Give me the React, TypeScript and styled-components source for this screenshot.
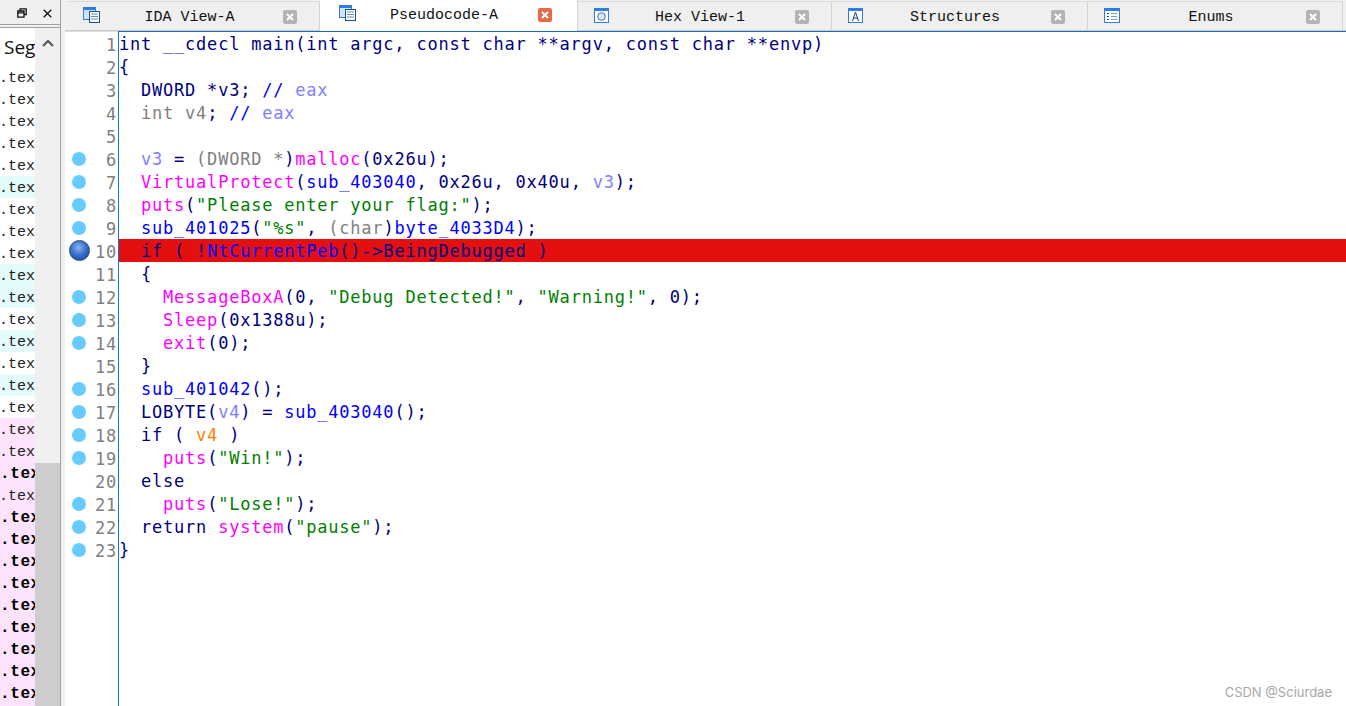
import styled, { createGlobalStyle } from "styled-components";

type Kind = "p" | "id" | "fn" | "str" | "cm" | "var" | "dim" | "hot";
type Tok = [Kind, string];

const COLORS: Record<Kind, string> = {
  p: "#000080",
  id: "#0000ff",
  fn: "#ff00ff",
  str: "#008000",
  cm: "#0000ff",
  var: "#8080ff",
  dim: "#808080",
  hot: "#ff8000",
};

const LINES: Tok[][] = [
  [["p", "int __cdecl main(int argc, const char **argv, const char **envp)"]],
  [["p", "{"]],
  [["p", "  DWORD *v3; "], ["cm", "// "], ["var", "eax"]],
  [["p", "  "], ["dim", "int v4"], ["p", "; "], ["cm", "// "], ["var", "eax"]],
  [],
  [["p", "  "], ["var", "v3"], ["p", " = "], ["dim", "(DWORD *"], ["p", ")"], ["fn", "malloc"], ["p", "(0x26u);"]],
  [["p", "  "], ["fn", "VirtualProtect"], ["p", "("], ["id", "sub_403040"], ["p", ", 0x26u, 0x40u, "], ["var", "v3"], ["p", ");"]],
  [["p", "  "], ["fn", "puts"], ["p", "("], ["str", '"Please enter your flag:"'], ["p", ");"]],
  [["p", "  "], ["id", "sub_401025"], ["p", "("], ["str", '"%s"'], ["p", ", "], ["dim", "(char"], ["p", ")"], ["id", "byte_4033D4"], ["p", ");"]],
  [["p", "  if ( !"], ["id", "NtCurrentPeb"], ["p", "()->BeingDebugged )"]],
  [["p", "  {"]],
  [["p", "    "], ["fn", "MessageBoxA"], ["p", "(0, "], ["str", '"Debug Detected!"'], ["p", ", "], ["str", '"Warning!"'], ["p", ", 0);"]],
  [["p", "    "], ["fn", "Sleep"], ["p", "(0x1388u);"]],
  [["p", "    "], ["fn", "exit"], ["p", "(0);"]],
  [["p", "  }"]],
  [["p", "  "], ["id", "sub_401042"], ["p", "();"]],
  [["p", "  LOBYTE("], ["var", "v4"], ["p", ") = "], ["id", "sub_403040"], ["p", "();"]],
  [["p", "  if ( "], ["hot", "v4"], ["p", " )"]],
  [["p", "    "], ["fn", "puts"], ["p", "("], ["str", '"Win!"'], ["p", ");"]],
  [["p", "  else"]],
  [["p", "    "], ["fn", "puts"], ["p", "("], ["str", '"Lose!"'], ["p", ");"]],
  [["p", "  return "], ["fn", "system"], ["p", "("], ["str", '"pause"'], ["p", ");"]],
  [["p", "}"]],
];

// line numbers without a breakpoint dot
const NO_DOT = [1, 2, 3, 4, 5, 11, 15, 20];
const HIT_LINE = 10;

type SegTone = "plain" | "cyan" | "pink";
const segRows: { tone: SegTone; bold: boolean }[] = Array.from({ length: 30 }, (_, i) => {
  const cyan = [5, 9, 10, 12, 14].includes(i);
  const pinkPlain = [16, 17, 19].includes(i);
  if (i >= 16) return { tone: "pink", bold: !pinkPlain };
  return { tone: cyan ? "cyan" : "plain", bold: false };
});

const Global = createGlobalStyle`
  html, body { margin: 0; padding: 0; background: #fff; }
  * { box-sizing: border-box; }
`;

const Page = styled.div`
  position: relative;
  display: flex;
  width: 1346px;
  height: 706px;
  overflow: hidden;
  background: #fff;
`;

const Sidebar = styled.aside`
  width: 61px;
  flex: none;
  display: flex;
  flex-direction: column;
  border-right: 1px solid #a0a0a0;
  background: #f0f0f0;
`;

const SideBar = styled.div`
  height: 25px;
  flex: none;
  display: flex;
  align-items: center;
  justify-content: flex-end;
  gap: 16px;
  padding: 2px 8px 0 0;
  border-bottom: 1px solid #a0a0a0;
`;

const SideBody = styled.div`
  margin-top: 2px;
  flex: 1;
  min-height: 0;
  display: flex;
  border-top: 1px solid #a0a0a0;
`;

const SegList = styled.div`
  width: 35px;
  flex: none;
  background: #fff;
  overflow: hidden;
`;

const SegHead = styled.div`
  height: 38px;
  padding: 5px 0 0 4px;
  font: 19px/28px "Open Sans", "Liberation Sans", sans-serif;
  color: #111;
  white-space: nowrap;
  overflow: hidden;
`;

const SegRow = styled.div<{ $tone: SegTone; $bold: boolean }>`
  height: 22px;
  margin-left: ${(p) => (p.$bold ? "0" : "-1px")};
  font-family: "Liberation Mono", monospace;
  font-size: ${(p) => (p.$bold ? "16px" : "15px")};
  line-height: 25px;
  letter-spacing: ${(p) => (p.$bold ? "0.6px" : "0")};
  font-weight: ${(p) => (p.$bold ? 700 : 400)};
  color: ${(p) => (p.$bold ? "#000" : "#222")};
  white-space: nowrap;
  overflow: hidden;
  background: ${(p) =>
    p.$tone === "cyan" ? "#e4fbfb" : p.$tone === "pink" ? "#fde4fc" : "#fff"};
`;

const Scrollbar = styled.div`
  flex: 1;
  display: flex;
  flex-direction: column;
  background: #f0f0f0;
`;

const ScrollUp = styled.div`
  height: 29px;
  display: flex;
  align-items: center;
  justify-content: center;
  flex: none;
`;

const ScrollTrack = styled.div`
  flex: 1;
`;

const ScrollThumb = styled.div`
  height: 243px;
  flex: none;
  background: #cdcdcd;
`;

const Splitter = styled.div`
  width: 4px;
  flex: none;
  background: #f0f0f0;
`;

const Main = styled.main`
  flex: 1;
  min-width: 0;
  display: flex;
  flex-direction: column;
`;

const TabBar = styled.div`
  height: 31px;
  flex: none;
  display: flex;
  padding: 1px 4px 0 2px;
  background: #f0f0f0;
  border-bottom: 1px solid #c8c8c8;
`;

const Tab = styled.div<{ $active?: boolean; $w: number }>`
  width: ${(p) => p.$w}px;
  flex: none;
  display: flex;
  align-items: center;
  padding: ${(p) => (p.$active ? "0 25px 1px 19px" : "2px 22px 0 16px")};
  margin-top: ${(p) => (p.$active ? "-1px" : "0")};
  margin-bottom: ${(p) => (p.$active ? "-1px" : "0")};
  background: ${(p) => (p.$active ? "#fff" : "#efefef")};
  border-top: ${(p) => (p.$active ? "none" : "1px solid #d9d9d9")};
  border-right: 1px solid #d4d4d4;
`;

const TabIcon = styled.span`
  display: flex;
  flex: none;
  margin-bottom: 4px;
`;

const TabLabel = styled.span<{ $active?: boolean }>`
  flex: 1;
  padding: 2px ${(p) => (p.$active ? "6px" : "4px")} 0 0;
  text-align: center;
  font: 15px/20px "Liberation Mono", monospace;
  color: #111;
  white-space: nowrap;
`;

const CloseBtn = styled.span<{ $active?: boolean }>`
  width: 14px;
  height: 14px;
  flex: none;
  display: flex;
  align-items: center;
  justify-content: center;
  border-radius: 2px;
  background: ${(p) => (p.$active ? "#e8694a" : "#b4b4b4")};
`;

const Editor = styled.div`
  flex: 1;
  min-height: 0;
  display: flex;
`;

const Gutter = styled.div`
  width: 53px;
  flex: none;
  border-top: 1px solid #dedede;
`;

const GutterRow = styled.div`
  height: 23px;
  display: flex;
  align-items: center;
  padding-right: 1px;
`;

const DotSlot = styled.span`
  width: 28px;
  flex: none;
  display: flex;
  justify-content: center;
`;

const Dot = styled.span`
  width: 14px;
  height: 14px;
  border-radius: 50%;
  background: #66ccff;
`;

const HitDot = styled.span`
  width: 21px;
  height: 21px;
  margin-left: 1px;
  border-radius: 50%;
  border: 1px solid #1b4f6e;
  background: radial-gradient(circle at 45% 35%, #8fb4ee 0%, #3a72cf 45%, #123f8c 100%);
`;

const LineNo = styled.span`
  margin: 2px 0 0 auto;
  font-family: "DejaVu Sans Mono", monospace;
  font-size: 17px;
  letter-spacing: 0.78px;
  color: #808080;
`;

const Code = styled.div`
  flex: 1;
  min-width: 0;
  border-top: 1px solid #1a6fb8;
  border-left: 1px solid #0a78d7;
  background: #fff;
`;

const CodeLine = styled.div<{ $hit?: boolean }>`
  height: 23px;
  font-family: "DejaVu Sans Mono", monospace;
  font-size: 17px;
  line-height: 25px;
  letter-spacing: 0.78px;
  white-space: pre;
  background: ${(p) => (p.$hit ? "#e41010" : "transparent")};
`;

const Token = styled.span<{ $kind: Kind }>`
  color: ${(p) => COLORS[p.$kind]};
`;

const Watermark = styled.div`
  position: absolute;
  right: 14px;
  bottom: 6px;
  font: 13px/16px Inter, "Liberation Sans", sans-serif;
  color: #a8a8a8;
`;

function CloseIcon() {
  return (
    <svg width="8" height="8" viewBox="0 0 8 8">
      <path d="M1 1l6 6M7 1l-6 6" stroke="#fff" strokeWidth="2" />
    </svg>
  );
}

function DocsIcon() {
  return (
    <svg width="17" height="16" viewBox="0 0 17 16">
      <rect x="0.5" y="0.5" width="12" height="12" fill="#cfe3fa" stroke="#2f7de0" />
      <rect x="0" y="0" width="13" height="3" fill="#2f7de0" />
      <rect x="6.5" y="4.5" width="10" height="11" fill="#fff" stroke="#1c4f86" />
      <path d="M8 7h7M8 9.5h7M8 12h7" stroke="#5f8bb5" />
    </svg>
  );
}

function HexIcon() {
  return (
    <svg width="15" height="15" viewBox="0 0 15 15">
      <rect x="0.5" y="0.5" width="14" height="14" fill="#fff" stroke="#2f7de0" />
      <rect x="0" y="0" width="15" height="3" fill="#2f7de0" />
      <circle cx="7.5" cy="8.5" r="3.8" fill="#dbe8fb" stroke="#3a6fc0" />
    </svg>
  );
}

function StructIcon() {
  return (
    <svg width="15" height="15" viewBox="0 0 15 15">
      <rect x="0.5" y="0.5" width="14" height="14" fill="#fff" stroke="#2f7de0" />
      <rect x="0" y="0" width="15" height="3" fill="#2f7de0" />
      <path d="M4.5 13l3-9 3 9M5.5 10h4" fill="none" stroke="#1c3f78" />
    </svg>
  );
}

function EnumIcon() {
  return (
    <svg width="16" height="15" viewBox="0 0 16 15">
      <rect x="0.5" y="0.5" width="15" height="14" fill="#fff" stroke="#2f7de0" />
      <rect x="0" y="0" width="16" height="3" fill="#2f7de0" />
      <path d="M3 5.5h2M3 8.5h2M3 11.5h2" stroke="#1c4f86" />
      <path d="M7 5.5h6M7 8.5h6M7 11.5h6" stroke="#7f9fc5" />
    </svg>
  );
}

const TABS = [
  { label: "IDA View-A", icon: <DocsIcon />, w: 253 },
  { label: "Pseudocode-A", icon: <DocsIcon />, w: 258, active: true },
  { label: "Hex View-1", icon: <HexIcon />, w: 254 },
  { label: "Structures", icon: <StructIcon />, w: 256 },
  { label: "Enums", icon: <EnumIcon />, w: 255 },
];

export default function App() {
  return (
    <Page>
      <Global />
      <Sidebar>
        <SideBar>
          <svg width="10" height="10" viewBox="0 0 10 10">
            <path d="M3 2.5V.8h6.2V6.5H7.5M.8 3h6.2v6.2H.8zM.8 4.8H7" fill="none" stroke="#111" strokeWidth="1.3" />
          </svg>
          <svg width="9" height="9" viewBox="0 0 9 9">
            <path d="M.7.7l7.6 7.6M8.3.7L.7 8.3" stroke="#111" strokeWidth="1.3" />
          </svg>
        </SideBar>
        <SideBody>
          <SegList>
            <SegHead>Segments</SegHead>
            {segRows.map((row, i) => (
              <SegRow key={i} $tone={row.tone} $bold={row.bold}>
                .text
              </SegRow>
            ))}
          </SegList>
          <Scrollbar>
            <ScrollUp>
              <svg width="12" height="8" viewBox="0 0 12 8">
                <path d="M1 7l5-5 5 5" fill="none" stroke="#555" strokeWidth="2" />
              </svg>
            </ScrollUp>
            <ScrollTrack />
            <ScrollThumb />
          </Scrollbar>
        </SideBody>
      </Sidebar>
      <Splitter />
      <Main>
        <TabBar>
          {TABS.map((tab) => (
            <Tab key={tab.label} $active={tab.active} $w={tab.w}>
              <TabIcon>{tab.icon}</TabIcon>
              <TabLabel $active={tab.active}>{tab.label}</TabLabel>
              <CloseBtn $active={tab.active}>
                <CloseIcon />
              </CloseBtn>
            </Tab>
          ))}
        </TabBar>
        <Editor>
          <Gutter>
            {LINES.map((_, i) => {
              const n = i + 1;
              return (
                <GutterRow key={n}>
                  <DotSlot>
                    {n === HIT_LINE ? <HitDot /> : NO_DOT.includes(n) ? null : <Dot />}
                  </DotSlot>
                  <LineNo>{n}</LineNo>
                </GutterRow>
              );
            })}
          </Gutter>
          <Code>
            {LINES.map((toks, i) => (
              <CodeLine key={i} $hit={i + 1 === HIT_LINE}>
                {toks.map(([kind, text], j) => (
                  <Token key={j} $kind={kind}>
                    {text}
                  </Token>
                ))}
              </CodeLine>
            ))}
          </Code>
        </Editor>
      </Main>
      <Watermark>CSDN @Sciurdae</Watermark>
    </Page>
  );
}
